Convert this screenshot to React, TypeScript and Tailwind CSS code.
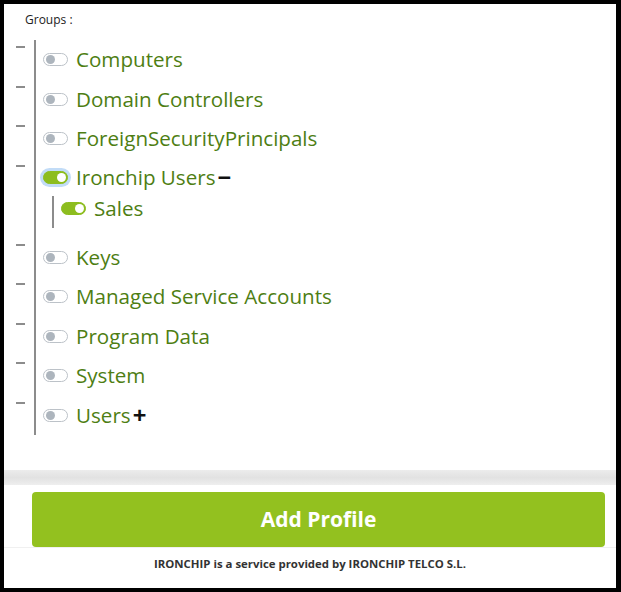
import React from 'react';

type Group = {
  name: string;
  on?: boolean;
  focus?: boolean;
  sign?: '−' | '+';
  children?: Group[];
};

const groups: Group[] = [
  { name: 'Computers' },
  { name: 'Domain Controllers' },
  { name: 'ForeignSecurityPrincipals' },
  { name: 'Ironchip Users', on: true, focus: true, sign: '−', children: [{ name: 'Sales', on: true }] },
  { name: 'Keys' },
  { name: 'Managed Service Accounts' },
  { name: 'Program Data' },
  { name: 'System' },
  { name: 'Users', sign: '+' },
];

function Switch({ on, focus }: { on?: boolean; focus?: boolean }) {
  return (
    <span
      className={
        'flex h-[13px] w-[25px] shrink-0 items-center rounded-full border px-[1.5px] ' +
        (on ? 'justify-end border-[#8dbd1f] bg-[#8dbd1f]' : 'justify-start border-[#bcc2c8] bg-white') +
        (focus ? ' ring-[3px] ring-[#c2dcf7]' : '')
      }
    >
      <span className={'h-[9px] w-[9px] rounded-full ' + (on ? 'bg-white' : 'bg-[#adb5bd]')} />
    </span>
  );
}

function Label({ g }: { g: Group }) {
  return (
    <span className="flex items-center text-[20.6px] text-[#4e7e13]">
      <span className="ml-[8px]">{g.name}</span>
      {g.sign && (
        <span className="ml-[2px] text-[24px] leading-none font-bold text-[#111]">{g.sign}</span>
      )}
    </span>
  );
}

export default function App() {
  return (
    <div
      className="flex h-[592px] w-[621px] bg-black pb-[4px] pl-[4px] pr-[5px] pt-[4px]"
      style={{ fontFamily: '"Open Sans", "Noto Sans", sans-serif' }}
    >
      <div className="flex flex-1 flex-col bg-white">
        <div className="h-[466px] pl-[12px]">
          <div className="pl-[9px] pt-[8px] text-[12px] leading-[16px] text-[#222]">Groups :</div>
          <ul className="ml-[18px] mt-[12px] border-l-2 border-[#8c8c8c] pl-[7px]">
            {groups.map((g) => (
              <li
                key={g.name}
                className="relative before:absolute before:left-[-27px] before:top-[6px] before:h-[2px] before:w-[9px] before:bg-[#8c8c8c] before:content-['']"
              >
                <div className={'flex items-center ' + (g.children ? 'h-[37.5px]' : 'h-[39.5px]')}>
                  <Switch on={g.on} focus={g.focus} />
                  <Label g={g} />
                </div>
                {g.children && (
                  <ul className="mb-[9.5px] ml-[9px] border-l-2 border-[#8c8c8c] pb-[8px] pl-[7px]">
                    {g.children.map((c) => (
                      <li key={c.name} className="flex h-[24px] items-center">
                        <Switch on={c.on} />
                        <Label g={c} />
                      </li>
                    ))}
                  </ul>
                )}
              </li>
            ))}
          </ul>
        </div>
        <div className="h-[15px] bg-gradient-to-b from-[#ececec] via-[#e2e2e2] to-[#eeeeee]" />
        <div className="ml-[28px] mr-[11px] pt-[7px]">
          <button className="flex h-[55px] w-full items-center justify-center rounded-[4px] bg-[#93c11f] text-[21px] font-bold text-white">
            Add Profile
          </button>
        </div>
        <div className="flex flex-1 justify-center border-t border-[#f0f0f0] pt-[7px]">
          <span className="text-[11.4px] font-bold text-[#333]">
            IRONCHIP is a service provided by IRONCHIP TELCO S.L.
          </span>
        </div>
      </div>
    </div>
  );
}
